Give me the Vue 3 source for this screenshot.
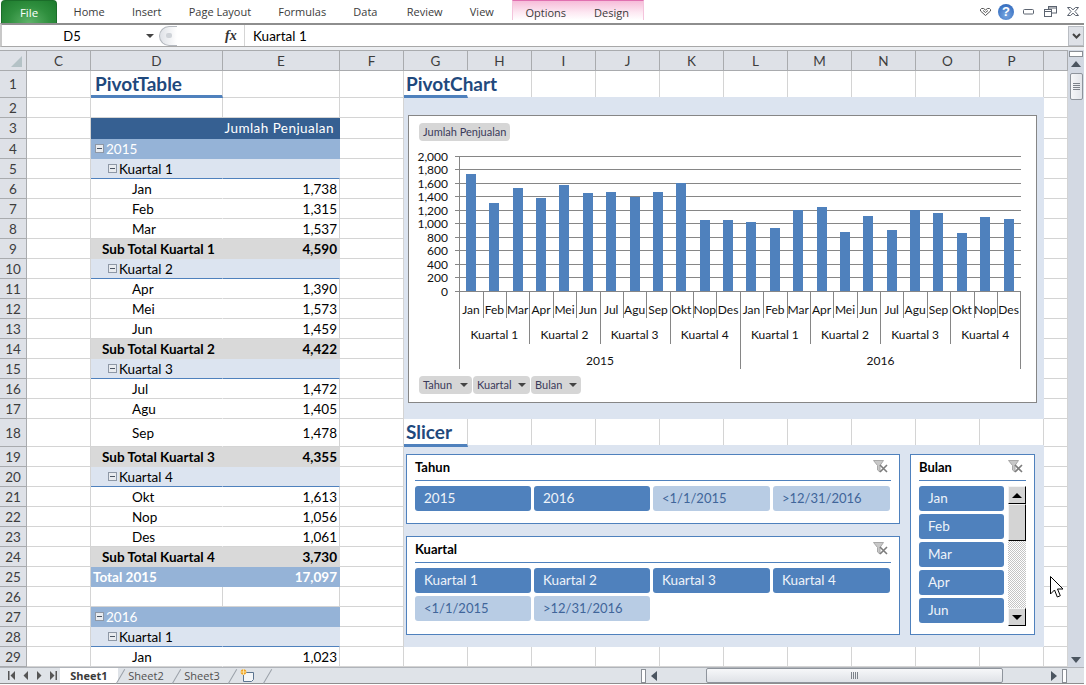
<script setup>
const colLetters = ['C','D','E','F','G','H','I','J','K','L','M','N','O','P','']
const pivot = {
  3:['head','','Jumlah Penjualan'],4:['year','2015',''],5:['qtr','Kuartal 1',''],
  6:['mon','Jan','1,738'],7:['mon','Feb','1,315'],8:['mon','Mar','1,537'],9:['sub','Sub Total Kuartal 1','4,590'],
  10:['qtr','Kuartal 2',''],11:['mon','Apr','1,390'],12:['mon','Mei','1,573'],13:['mon','Jun','1,459'],14:['sub','Sub Total Kuartal 2','4,422'],
  15:['qtr','Kuartal 3',''],16:['mon','Jul','1,472'],17:['mon','Agu','1,405'],18:['mon','Sep','1,478'],19:['sub','Sub Total Kuartal 3','4,355'],
  20:['qtr','Kuartal 4',''],21:['mon','Okt','1,613'],22:['mon','Nop','1,056'],23:['mon','Des','1,061'],24:['sub','Sub Total Kuartal 4','3,730'],
  25:['total','Total 2015','17,097'],27:['year','2016',''],28:['qtr','Kuartal 1',''],29:['mon','Jan','1,023']
}
const rows = Array.from({length:29},(_,i)=>i+1)
function kind(r,c){
  const p = pivot[r]
  if(p && (c==='D'||c==='E')) return 'p-'+p[0]+' p-'+c.toLowerCase()
  if(r===1 && c==='G') return 'open-right'
  return ''
}
function dText(r){ return pivot[r] ? pivot[r][1] : '' }
function eText(r){ return pivot[r] ? pivot[r][2] : '' }
function hasBox(r){ return pivot[r] && (pivot[r][0]==='year'||pivot[r][0]==='qtr') }

const months = ['Jan','Feb','Mar','Apr','Mei','Jun','Jul','Agu','Sep','Okt','Nop','Des']
const values = [1738,1315,1537,1390,1573,1459,1472,1405,1478,1613,1056,1061,1023,940,1200,1250,880,1120,910,1200,1170,860,1110,1080]
const X0 = 459.3, STEP = 23.375
const tickX = i => Math.round(X0 + STEP*i) + 0.5
const grid = Array.from({length:11},(_,i)=>Math.floor(156+13.5*i)+0.5)
const axisLabels = ['2,000','1,800','1,600','1,400','1,200','1,000','800','600','400','200','0']
const bars = values.map((v,i)=>{
  const h = Math.floor(v/2000*135)
  return { x: Math.round(X0+STEP*(i+0.5)-5), y: 291-h, h }
})
const catLabels = values.map((v,i)=>({ t: months[i%12], x: X0+STEP*(i+0.5) }))
const ticks = Array.from({length:25},(_,i)=>i)
const qLabels = Array.from({length:8},(_,i)=>({ t:'Kuartal '+(i%4+1), x:X0+STEP*(3*i+1.5) }))
const qTicks = Array.from({length:9},(_,i)=>i*3)

const slTahun = [['2015',1],['2016',1],['<1/1/2015',0],['>12/31/2016',0]]
const slKuartal = [['Kuartal 1',1],['Kuartal 2',1],['Kuartal 3',1],['Kuartal 4',1],['<1/1/2015',0],['>12/31/2016',0]]
const slBulan = ['Jan','Feb','Mar','Apr','Jun']
const tabs = ['Home','Insert','Page Layout','Formulas','Data','Review','View']
</script>

<template>
  <div class="app">
    <div class="ribbon">
      <div class="file">File</div>
      <div v-for="t in tabs" :key="t" class="tab">{{ t }}</div>
      <div class="ctx"><div class="tab">Options</div><div class="tab">Design</div></div>
      <div class="win">
        <svg width="11" height="9" viewBox="0 0 11 9"><path d="M1.5 1.5h2l2 1.5 2-1.5h2l1 1v1.5L5.5 8.5 .5 4V2.500z" fill="#fff" stroke="#555"/><path d="M3 3.500l2.500 2 2.500-2" fill="none" stroke="#555"/></svg>
        <div class="help">?</div>
        <svg class="w-min" width="11" height="6" viewBox="0 0 11 6"><rect x=".5" y=".5" width="10" height="4.500" rx="1" fill="#fff" stroke="#5c6470"/></svg>
        <svg class="w-res" width="13" height="11" viewBox="0 0 13 11"><rect x="4.500" y=".5" width="8" height="6.500" fill="#fff" stroke="#5c6470"/><rect x=".5" y="3.500" width="7" height="7" fill="#fff" stroke="#5c6470"/><path d="M1 5.500h6M5 2h7" stroke="#5c6470"/></svg>
        <svg class="w-cls" width="12" height="9" viewBox="0 0 12 9"><path d="M.5 .5h3l2.500 2.300L8.500 .5h3L8 4.500l3.500 4h-3L6 6.200 3.500 8.500h-3L4 4.500z" fill="#fff" stroke="#5c6470"/></svg>
      </div>
    </div>

    <div class="formula">
      <div class="name">D5</div>
      <span class="name-arrow"></span>
      <div class="knob"><span></span></div>
      <div class="fx">fx</div>
      <div class="ftext">Kuartal 1</div>
      <div class="fdrop"><svg width="9" height="6" viewBox="0 0 9 6"><path d="M1 1l3.500 3.500L8 1" fill="none" stroke="#444" stroke-width="2"/></svg></div>
    </div>
    <div class="strip"></div>

    <div class="main">
      <div class="sheetwrap">
        <div class="sheet">
          <div class="corner"><i></i></div>
          <div v-for="c in colLetters" :key="c" class="colhdr">{{ c }}</div>
          <template v-for="r in rows" :key="r">
            <div class="rowhdr">{{ r }}</div>
            <div v-for="c in colLetters" :key="c" class="cell" :class="kind(r,c)">
              <template v-if="c==='D'">
                <span v-if="hasBox(r)" class="mbox"></span>{{ dText(r) }}
                <span v-if="r===1" class="title">PivotTable</span>
              </template>
              <template v-if="c==='E'">{{ eText(r) }}</template>
              <span v-if="c==='G' && r===1" class="title g">PivotChart</span>
              <span v-if="c==='G' && r===18" class="title g">Slicer</span>
            </div>
          </template>
        </div>

        <div class="panel panel-chart">
          <div class="chart">
            <div class="pills"><span class="pill">Jumlah Penjualan</span></div>
            <svg class="plot" width="627" height="228" viewBox="409 145 627 228">
              <g stroke="#868686" shape-rendering="crispEdges">
                <line v-for="y in grid" :key="y" x1="455" :y1="y" x2="1021" :y2="y"/>
              </g>
              <rect v-for="(b,i) in bars" :key="i" :x="b.x" :y="b.y" width="10" :height="b.h" fill="#4f81bd" shape-rendering="crispEdges"/>
              <g stroke="#868686" shape-rendering="crispEdges">
                <line v-for="i in ticks" :key="i" :x1="tickX(i)" y1="291" :x2="tickX(i)" y2="318"/>
                <line v-for="i in qTicks" :key="'q'+i" :x1="tickX(i)" y1="291" :x2="tickX(i)" y2="344"/>
                <line x1="459.5" y1="156" x2="459.5" y2="369"/>
                <line x1="740.5" y1="291" x2="740.5" y2="369"/>
                <line x1="1020.5" y1="291" x2="1020.5" y2="369"/>
              </g>
              <text v-for="(t,i) in axisLabels" :key="t" class="ax" x="448" :y="grid[i]+4.500" text-anchor="end">{{ t }}</text>
              <text v-for="(l,i) in catLabels" :key="i" class="ax" :x="l.x" y="314" text-anchor="middle">{{ l.t }}</text>
              <text v-for="(l,i) in qLabels" :key="i" class="ax" :x="l.x" y="339" text-anchor="middle">{{ l.t }}</text>
              <text class="ax" x="600" y="365" text-anchor="middle">2015</text>
              <text class="ax" x="880.500" y="365" text-anchor="middle">2016</text>
            </svg>
            <div class="pills low">
              <span class="pill dd p1">Tahun<i></i></span>
              <span class="pill dd p2">Kuartal<i></i></span>
              <span class="pill dd p3">Bulan<i></i></span>
            </div>
          </div>
        </div>

        <div class="panel panel-slicer">
          <div class="sl-left">
            <div class="slicer">
              <div class="sl-head">Tahun
                <svg class="funnel" width="16" height="14" viewBox="0 0 16 14"><path d="M.5 .5h10L7 5.500V12L4.500 10V5.500z" fill="#c8c8c8" stroke="#a8a8a8"/><path d="M7 5l7 7M14 5l-7 7" stroke="#7c7c7c" stroke-width="1.600"/></svg>
              </div>
              <div class="sl-btns four">
                <div v-for="b in slTahun" :key="b[0]" class="sb" :class="{off:!b[1]}">{{ b[0] }}</div>
              </div>
            </div>
            <div class="slicer">
              <div class="sl-head">Kuartal
                <svg class="funnel" width="16" height="14" viewBox="0 0 16 14"><path d="M.5 .5h10L7 5.500V12L4.500 10V5.500z" fill="#c8c8c8" stroke="#a8a8a8"/><path d="M7 5l7 7M14 5l-7 7" stroke="#7c7c7c" stroke-width="1.600"/></svg>
              </div>
              <div class="sl-btns four">
                <div v-for="b in slKuartal" :key="b[0]" class="sb" :class="{off:!b[1]}">{{ b[0] }}</div>
              </div>
            </div>
          </div>
          <div class="slicer bulan">
            <div class="sl-head">Bulan
              <svg class="funnel" width="16" height="14" viewBox="0 0 16 14"><path d="M.5 .5h10L7 5.500V12L4.500 10V5.500z" fill="#c8c8c8" stroke="#a8a8a8"/><path d="M7 5l7 7M14 5l-7 7" stroke="#7c7c7c" stroke-width="1.600"/></svg>
            </div>
            <div class="bul-body">
              <div class="sl-btns one">
                <div v-for="m in slBulan" :key="m" class="sb">{{ m }}</div>
              </div>
              <div class="cscroll">
                <div class="cbtn"><i class="up"></i></div>
                <div class="cthumb"></div>
                <div class="ctrack"></div>
                <div class="cbtn"><i class="down"></i></div>
              </div>
            </div>
          </div>
        </div>
      </div>

      <div class="vscroll">
        <div class="vsplit"></div>
        <svg class="vup" width="10" height="6" viewBox="0 0 10 6"><path d="M5 0l5 6H0z" fill="#4b5560"/></svg>
        <div class="vthumb"><i></i><i></i><i></i><i></i></div>
        <div class="grow"></div>
        <svg class="vdown" width="10" height="6" viewBox="0 0 10 6"><path d="M0 0h10L5 6z" fill="#4b5560"/></svg>
      </div>
    </div>

    <div class="bottom">
      <div class="nav">
        <svg width="52" height="9" viewBox="0 0 52 9"><g fill="#555"><path d="M0 0h1.500v9H0zM7 0v9L2.500 4.500zM20 0v9l-4.500-4.500zM29 0v9l4.500-4.500zM42 0v9l4.500-4.500zM47.500 0H49v9h-1.500z"/></g></svg>
      </div>
      <div class="stab on">Sheet1</div>
      <div class="stab">Sheet2</div>
      <div class="stab">Sheet3</div>
      <div class="stab new">
        <svg width="15" height="13" viewBox="0 0 15 13"><path d="M3.500 3.500h10v7l-2 2h-8z" fill="#f4f6f8" stroke="#5c7590"/><circle cx="3.500" cy="3" r="2.800" fill="#f0a020"/><path d="M3.500 0v6M.5 3h6" stroke="#fbe3a0"/></svg>
      </div>
      <div class="hspacer"></div>
      <div class="hsplit"></div>
      <svg class="harrow-l" width="6" height="10" viewBox="0 0 6 10"><path d="M6 0v10L0 5z" fill="#4b5560"/></svg>
      <div class="hthumb"><i></i><i></i><i></i><i></i></div>
      <svg class="harrow-r" width="6" height="10" viewBox="0 0 6 10"><path d="M0 0v10l6-5z" fill="#4b5560"/></svg>
      <div class="hsplit end"></div>
    </div>

    <svg class="cursor" width="14" height="23" viewBox="0 0 14 23"><path d="M.5 .5v17.500l4-4 2.800 7 3-1.300-2.800-6.700h5.500z" fill="#fff" stroke="#000"/></svg>
  </div>
</template>

<style>
html, body { margin: 0; background: #fff; }
</style>

<style scoped>
.app { position: relative; width: 1084px; height: 685px; overflow: hidden; background: #fff; font-family: Lato, "Liberation Sans", sans-serif; color: #000; }

.ribbon { display: flex; height: 23px; align-items: stretch; font-family: "Open Sans", sans-serif; font-size: 11px; color: #3b3b3b; }
.file { width: 56px; margin: 0 3px 0 1px; border-radius: 4px 4px 0 0; background: radial-gradient(ellipse at 50% 100%, #5fb36a 0, #2f8f3e 55%, #1c7a2c 100%); border: 1px solid #1b6d2a; border-bottom: 0; box-sizing: border-box; color: #fff; text-align: center; line-height: 23px; font-size: 11.5px; }
.tab { padding: 0 13.6px; line-height: 24px; }
.tab:nth-child(7) { margin-left: 2px; }
.ctx { display: flex; margin-left: 5px; height: 20px; width: 132px; box-sizing: border-box; border-top: 1px solid #e070b0; background: linear-gradient(#f6bcd9, #fde8f2 60%, #fff); border-left: 1px solid #f4c4dc; border-right: 1px solid #f4c4dc; }
.ctx .tab { padding: 0 14px 0 12px; line-height: 23px; height: 22px; }
.ctx .tab:last-child { padding-left: 14px; }
.win { display: flex; align-items: center; margin-left: auto; position: relative; width: 104px; }
.help { width: 16px; height: 16px; margin-left: 7px; border-radius: 50%; background: radial-gradient(circle at 50% 70%, #78a6e0, #3c74c4 70%, #2c5ea8); color: #fff; font: bold 13px/16px "Liberation Sans", sans-serif; text-align: center; }
.w-min { margin-left: 9px; }
.w-res { margin-left: 10px; }
.w-cls { margin-left: 10px; }

.formula { display: flex; align-items: center; position: relative; height: 24px; box-sizing: border-box; border-top: 2px solid #8e8e8e; border-bottom: 1px solid #a8a8a8; border-left: 2px solid #c8c8c8; font-size: 13px; }
.name { width: 140px; text-align: center; }
.name-arrow { width: 0; height: 0; margin-left: 4px; border: 4px solid transparent; border-top: 4px solid #444; border-bottom: 0; }
.knob { width: 18px; height: 20px; margin-left: 5px; box-sizing: border-box; border: 1px solid #b5b9bf; border-right: 0; border-radius: 10px 0 0 10px; background: linear-gradient(90deg, #dfe2e7, #fff); display: flex; align-items: center; justify-content: center; }
.knob span { width: 6px; height: 5px; background: #cfd3d8; border-radius: 2px; }
.fx { margin-left: 48px; width: 19px; font: italic bold 14px/21px "Liberation Serif", serif; color: #333; border-right: 1px solid #d5d5d5; height: 21px; }
.ftext { margin-left: 8px; flex: 1; font-size: 13.5px; }
.fdrop { width: 16px; height: 20px; background: #dee1e7; border: 1px solid #b9bdc3; box-sizing: border-box; display: flex; align-items: center; justify-content: center; }
.strip { height: 3px; background: #eceef1; }

.main { display: flex; height: 617px; }
.sheetwrap { position: relative; width: 1068px; }
.sheet { display: grid; grid-template-columns: 27px 64px 132px 117px repeat(11, 64px) 24px; grid-template-rows: 21px 27px 20px 21px repeat(14, 20px) 28px repeat(11, 20px); width: 1068px; font-size: 13.500px; }
.corner, .colhdr, .rowhdr { background: #dee1e7; box-sizing: border-box; border-right: 1px solid #a9abae; border-bottom: 1px solid #a9abae; display: flex; align-items: center; justify-content: center; color: #3d3d3d; font-size: 13.500px; }
.corner, .colhdr { border-top: 1px solid #a9abae; }
.corner { position: relative; }
.corner i { position: absolute; right: 4px; bottom: 3px; width: 0; height: 0; border-left: 11px solid transparent; border-bottom: 11px solid #b4c2c6; }
.cell { box-sizing: border-box; border-right: 1px solid #d4d4d4; border-bottom: 1px solid #d4d4d4; display: flex; align-items: center; white-space: nowrap; min-width: 0; }
.open-right { border-right-color: transparent; }
.title { position: relative; z-index: 3; font-size: 19px; font-weight: 700; color: #1f497d; padding-left: 4px; }
.title.g { padding-left: 2px; }
.cell:has(.title) { position: relative; z-index: 3; border-bottom: 3px solid #4f81bd; }

.p-e { justify-content: flex-end; padding-right: 2px; }
.p-d { border-right-color: transparent; }
.p-head { background: #366092; border-color: #366092; color: #fff; }
.p-head.p-e { padding-right: 5px; letter-spacing: .45px; }
.p-year { background: #95b3d7; border-color: #95b3d7; color: #fff; padding-left: 4px; }
.p-year.p-e, .p-qtr.p-e { padding-left: 0; }
.p-qtr { background: #dce4f0; border-right-color: #dce4f0; border-bottom-color: #4f81bd; padding-left: 17px; }
.p-mon.p-d { padding-left: 41px; }
.p-sub { background: #d9d9d9; border-color: #d9d9d9; font-weight: 700; }
.p-sub.p-d { padding-left: 11px; }
.p-total { background: #95b3d7; border-color: #95b3d7; color: #fff; font-weight: 700; }
.p-total.p-d { padding-left: 2px; }
.mbox { display: inline-block; box-sizing: border-box; position: relative; width: 9px; height: 9px; margin-right: 2px; border: 1px solid #8e98a6; background: #e8ebef; }
.mbox::after { content: ""; position: absolute; left: 1px; right: 1px; top: 3px; height: 1px; background: #4a5564; }

.panel { position: absolute; left: 404px; width: 640px; background: #dce4f0; box-sizing: border-box; }
.panel-chart { top: 47px; height: 322px; padding: 18px 0 0 4px; }
.chart { width: 629px; height: 288px; box-sizing: border-box; border: 1px solid #868686; background: #fff; }
.pills { display: flex; padding: 7px 0 4px 10px; }
.pills.low { padding: 3px 0 0 10px; gap: 1px; }
.pill { height: 18px; box-sizing: border-box; padding: 0 4px; border-radius: 4px; background: #d6d6d6; font-size: 11px; line-height: 18px; color: #3a3a5a; white-space: nowrap; }
.dd { position: relative; }
.dd i { position: absolute; right: 4px; top: 7px; width: 0; height: 0; border: 4px solid transparent; border-top: 4px solid #444; border-bottom: 0; }
.p1 { width: 53px; }
.p2 { width: 57px; }
.p3 { width: 50px; }
.plot { display: block; }
.ax { font-family: Lato, sans-serif; font-size: 12px; fill: #111; }

.panel-slicer { top: 395px; height: 202px; padding: 9px 0 0 2px; display: flex; gap: 10px; align-items: flex-start; }
.sl-left { display: flex; flex-direction: column; gap: 12px; width: 494px; }
.slicer { box-sizing: border-box; border: 1px solid #4f81bd; background: #fff; padding: 0 8px; }
.sl-left .slicer:first-child { height: 70px; }
.sl-left .slicer:last-child { height: 99px; }
.bulan { width: 125px; height: 181px; }
.sl-head { display: flex; justify-content: space-between; align-items: center; height: 26px; padding-bottom: 2px; box-sizing: border-box; border-bottom: 1px solid #4f81bd; font-weight: 700; font-size: 13px; }
.funnel { margin-right: 2px; }
.sl-btns { display: grid; gap: 3px; margin-top: 5px; align-content: start; }
.four { grid-template-columns: 116px 116px 117px 117px; }
.one { grid-template-columns: 85px; }
.sb { height: 25px; box-sizing: border-box; padding-left: 9px; border-radius: 3px; background: #4f81bd; color: #eef3f9; font-size: 13.500px; line-height: 25px; }
.sb.off { background: #b8cce4; color: #40659a; font-size: 13px; }
.bul-body { display: flex; gap: 4px; }
.cscroll { display: flex; flex-direction: column; width: 18px; height: 140px; margin-top: 5px; }
.cbtn, .cthumb { box-sizing: border-box; background: #d4d4d4; border: 1px solid; border-color: #f4f4f4 #000 #000 #f4f4f4; display: flex; align-items: center; justify-content: center; }
.cbtn { height: 18px; }
.cthumb { height: 37px; }
.ctrack { flex: 1; background: repeating-conic-gradient(#c4c4c4 0 25%, #fff 0 50%) 0 0 / 2px 2px; }
.cbtn i { width: 0; height: 0; border: 5px solid transparent; }
.cbtn .up { border-top: 0; border-bottom: 5px solid #000; }
.cbtn .down { border-bottom: 0; border-top: 5px solid #000; }

.vscroll { width: 16px; background: #d3d9e3; display: flex; flex-direction: column; align-items: center; }
.vsplit { width: 14px; height: 6px; margin-top: 1px; box-sizing: border-box; border: 1px solid #8a8f96; background: #fff; }
.vup { margin-top: 4px; }
.vthumb { width: 13px; height: 27px; margin-top: 6px; box-sizing: border-box; border: 1px solid #8e949c; border-radius: 2px; background: linear-gradient(90deg, #f6f7f9, #e2e5ea); display: flex; flex-direction: column; align-items: center; justify-content: center; gap: 1px; }
.vthumb i { width: 7px; height: 1px; background: #7c828a; }
.grow { flex: 1; }
.vdown { margin-bottom: 4px; }

.bottom { display: flex; align-items: center; position: relative; height: 17px; box-sizing: border-box; background: #dfe3e8; border-top: 1px solid #b0b4ba; border-bottom: 1px solid #8e8e8e; font-family: "Open Sans", sans-serif; font-size: 11px; color: #505050; }
.nav { width: 52px; padding-left: 8px; display: flex; }
.stab { position: relative; width: 56px; height: 15px; line-height: 15px; text-align: center; }
.stab::after { content: ""; position: absolute; right: -3px; top: 0; width: 1px; height: 17px; background: #9aa0a8; transform: rotate(30deg); }
.stab.on { width: 58px; background: #fff; font-weight: 700; color: #3a3a3a; }
.stab.new { width: 35px; display: flex; align-items: center; justify-content: center; }
.hspacer { width: 376px; }
.hsplit { width: 5px; height: 14px; box-sizing: border-box; border: 1px solid #8a8f96; background: #fff; }
.harrow-l { margin-left: 5px; }
.hthumb { width: 297px; height: 15px; margin-left: 49px; box-sizing: border-box; border: 1px solid #8e949c; border-radius: 2px; background: linear-gradient(#f6f7f9, #dfe2e7); display: flex; align-items: center; justify-content: center; gap: 1px; }
.hthumb i { width: 1px; height: 7px; background: #7c828a; }
.harrow-r { margin-left: 48px; }
.hsplit.end { margin-left: 5px; }

.cursor { position: absolute; left: 1050px; top: 576px; }
</style>
